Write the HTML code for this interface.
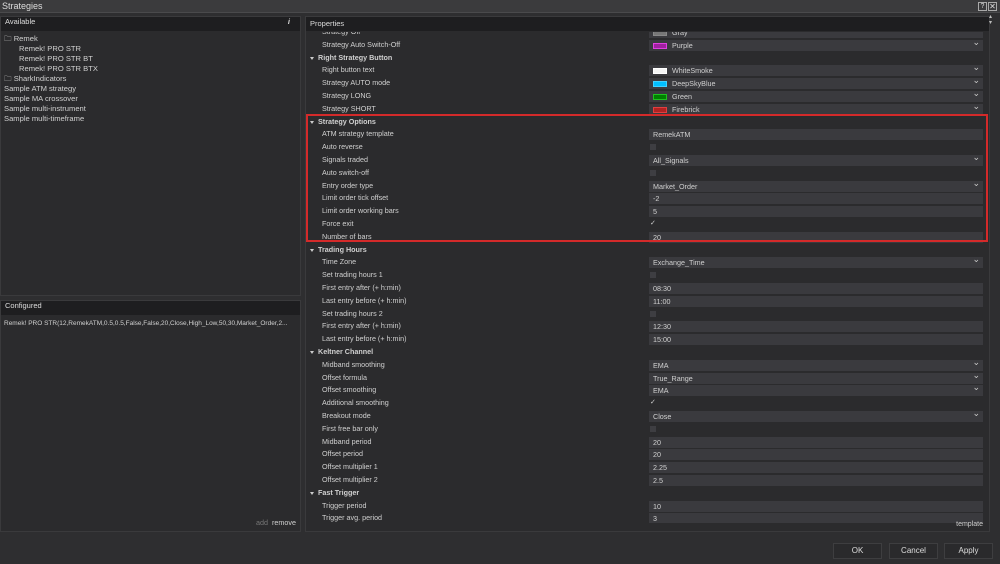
<!DOCTYPE html><html><head><style>
*{margin:0;padding:0;box-sizing:border-box}
body{width:1000px;height:564px;background:#2e2e30;font-family:"Liberation Sans",sans-serif;font-size:7.2px;color:#d0d0d0;position:relative;overflow:hidden}
.a{position:absolute}
.title{left:0;top:0;width:1000px;height:13px;background:#3b3b3d;border-bottom:1px solid #4a4a4c;font-size:9px;line-height:13px;padding-left:2px;color:#ddd}
.hdr{background:#1e1e20;height:14px;line-height:14px;padding-left:4px;font-size:7.5px;color:#ddd}
.lp{left:0;top:16px;width:301px;height:280px;background:#2b2b2d;border:1px solid #3a3a3c}
.lp div{line-height:10px}
.row{position:absolute;left:0;width:685px;height:12.8px;line-height:12.8px}
.lbl{position:absolute;left:16px}
.cat .lbl{left:12px;font-weight:bold}
.cat:before{content:"";position:absolute;left:4px;top:5px;border-left:2.5px solid transparent;border-right:2.5px solid transparent;border-top:3px solid #ccc}
.v{position:absolute;left:343px;width:334px;top:1px;height:11px;background:#3a3a3e;line-height:11px;padding-left:4px}
.dd:after{content:"⌄";position:absolute;right:3px;top:-3px;font-size:9px;color:#ccc}
.cb{position:absolute;left:344px;top:3px;width:6px;height:6px;background:#3e3e42}
.sw{display:inline-block;width:14px;height:6px;margin-right:5px;vertical-align:-1px;border:1px solid}
.btn{top:543px;height:16px;width:49px;border:1px solid #3e3e40;background:#2a2a2c;text-align:center;line-height:14px;font-size:8px;color:#ddd}
</style></head><body>
<div class="a title">Strategies</div>
<div class="a" style="left:978px;top:2px;width:9px;height:9px;border:1px solid #aaa;font-size:7px;line-height:7px;text-align:center;color:#ddd">?</div>
<div class="a" style="left:988px;top:2px;width:9px;height:9px;border:1px solid #aaa;font-size:8px;line-height:7px;text-align:center;color:#ddd">✕</div>

<div class="a lp"><div class="hdr">Available<span style="position:absolute;right:10px;font-style:italic;font-weight:bold">i</span></div>
<div style="padding:3px 0 0 3px;font-size:7.6px">
<div>🗀 Remek</div><div style="padding-left:15px">Remek! PRO STR</div><div style="padding-left:15px">Remek! PRO STR BT</div><div style="padding-left:15px">Remek! PRO STR BTX</div><div>🗀 SharkIndicators</div><div>Sample ATM strategy</div><div>Sample MA crossover</div><div>Sample multi-instrument</div><div>Sample multi-timeframe</div></div></div>
<div class="a lp" style="top:300px;height:232px"><div class="hdr">Configured</div><div style="padding:4px 3px;line-height:10px;white-space:nowrap;overflow:hidden;font-size:6.5px">Remek! PRO STR(12,RemekATM,0.5,0.5,False,False,20,Close,High_Low,50,30,Market_Order,2...</div>
<div class="a" style="right:4px;bottom:3px"><span style="color:#777">add</span>&nbsp; remove</div></div>

<div class="a" style="left:305px;top:16px;width:685px;height:516px;background:#2b2b2d;border:1px solid #3a3a3c;overflow:hidden">
<div class="hdr">Properties</div>
<div class="a" style="left:0;top:15px;width:685px;height:491px;overflow:hidden">
<div class="row" style="top:-6px"><span class="lbl">Strategy Off</span><div class="v"><span class="sw" style="background:#777;border-color:#888"></span>Gray</div></div>
<div class="row" style="top:6.8px"><span class="lbl">Strategy Auto Switch-Off</span><div class="v dd"><span class="sw" style="background:#a020a0;border-color:#e040e0"></span>Purple</div></div>
<div class="row cat" style="top:19.6px"><span class="lbl">Right Strategy Button</span></div>
<div class="row" style="top:32.4px"><span class="lbl">Right button text</span><div class="v dd"><span class="sw" style="background:#f5f5f5;border-color:#fff"></span>WhiteSmoke</div></div>
<div class="row" style="top:45.2px"><span class="lbl">Strategy AUTO mode</span><div class="v dd"><span class="sw" style="background:#00bfff;border-color:#40d0ff"></span>DeepSkyBlue</div></div>
<div class="row" style="top:58px"><span class="lbl">Strategy LONG</span><div class="v dd"><span class="sw" style="background:#008000;border-color:#20c020"></span>Green</div></div>
<div class="row" style="top:70.8px"><span class="lbl">Strategy SHORT</span><div class="v dd"><span class="sw" style="background:#b22222;border-color:#e04040"></span>Firebrick</div></div>
<div class="row cat" style="top:83.6px"><span class="lbl">Strategy Options</span></div>
<div class="row" style="top:96.4px"><span class="lbl">ATM strategy template</span><div class="v">RemekATM</div></div>
<div class="row" style="top:109.2px"><span class="lbl">Auto reverse</span><div class="cb"></div></div>
<div class="row" style="top:122px"><span class="lbl">Signals traded</span><div class="v dd">All_Signals</div></div>
<div class="row" style="top:134.8px"><span class="lbl">Auto switch-off</span><div class="cb"></div></div>
<div class="row" style="top:147.6px"><span class="lbl">Entry order type</span><div class="v dd">Market_Order</div></div>
<div class="row" style="top:160.4px"><span class="lbl">Limit order tick offset</span><div class="v">-2</div></div>
<div class="row" style="top:173.2px"><span class="lbl">Limit order working bars</span><div class="v">5</div></div>
<div class="row" style="top:186px"><span class="lbl">Force exit</span><div class="cb" style="background:none;font-size:7px;line-height:6px">✓</div></div>
<div class="row" style="top:198.8px"><span class="lbl">Number of bars</span><div class="v">20</div></div>
<div class="row cat" style="top:211.6px"><span class="lbl">Trading Hours</span></div>
<div class="row" style="top:224.4px"><span class="lbl">Time Zone</span><div class="v dd">Exchange_Time</div></div>
<div class="row" style="top:237.2px"><span class="lbl">Set trading hours 1</span><div class="cb"></div></div>
<div class="row" style="top:250px"><span class="lbl">First entry after (+ h:min)</span><div class="v">08:30</div></div>
<div class="row" style="top:262.8px"><span class="lbl">Last entry before (+ h:min)</span><div class="v">11:00</div></div>
<div class="row" style="top:275.6px"><span class="lbl">Set trading hours 2</span><div class="cb"></div></div>
<div class="row" style="top:288.4px"><span class="lbl">First entry after (+ h:min)</span><div class="v">12:30</div></div>
<div class="row" style="top:301.2px"><span class="lbl">Last entry before (+ h:min)</span><div class="v">15:00</div></div>
<div class="row cat" style="top:314px"><span class="lbl">Keltner Channel</span></div>
<div class="row" style="top:326.8px"><span class="lbl">Midband smoothing</span><div class="v dd">EMA</div></div>
<div class="row" style="top:339.6px"><span class="lbl">Offset formula</span><div class="v dd">True_Range</div></div>
<div class="row" style="top:352.4px"><span class="lbl">Offset smoothing</span><div class="v dd">EMA</div></div>
<div class="row" style="top:365.2px"><span class="lbl">Additional smoothing</span><div class="cb" style="background:none;font-size:7px;line-height:6px">✓</div></div>
<div class="row" style="top:378px"><span class="lbl">Breakout mode</span><div class="v dd">Close</div></div>
<div class="row" style="top:390.8px"><span class="lbl">First free bar only</span><div class="cb"></div></div>
<div class="row" style="top:403.6px"><span class="lbl">Midband period</span><div class="v">20</div></div>
<div class="row" style="top:416.4px"><span class="lbl">Offset period</span><div class="v">20</div></div>
<div class="row" style="top:429.2px"><span class="lbl">Offset multiplier 1</span><div class="v">2.25</div></div>
<div class="row" style="top:442px"><span class="lbl">Offset multiplier 2</span><div class="v">2.5</div></div>
<div class="row cat" style="top:454.8px"><span class="lbl">Fast Trigger</span></div>
<div class="row" style="top:467.6px"><span class="lbl">Trigger period</span><div class="v">10</div></div>
<div class="row" style="top:480.4px"><span class="lbl">Trigger avg. period</span><div class="v">3</div></div>
</div>
<div class="a" style="right:6px;top:504px;font-size:7px">template</div>
</div>
<div class="a" style="left:989px;top:14px;font-size:6px;line-height:6px;color:#bbb">▴<br>▾</div>
<div class="a" style="left:306px;top:114px;width:682px;height:128px;border:2px solid #d42a2a"></div>
<div class="a btn" style="left:833px">OK</div>
<div class="a btn" style="left:889px">Cancel</div>
<div class="a btn" style="left:944px">Apply</div>
</body></html>
